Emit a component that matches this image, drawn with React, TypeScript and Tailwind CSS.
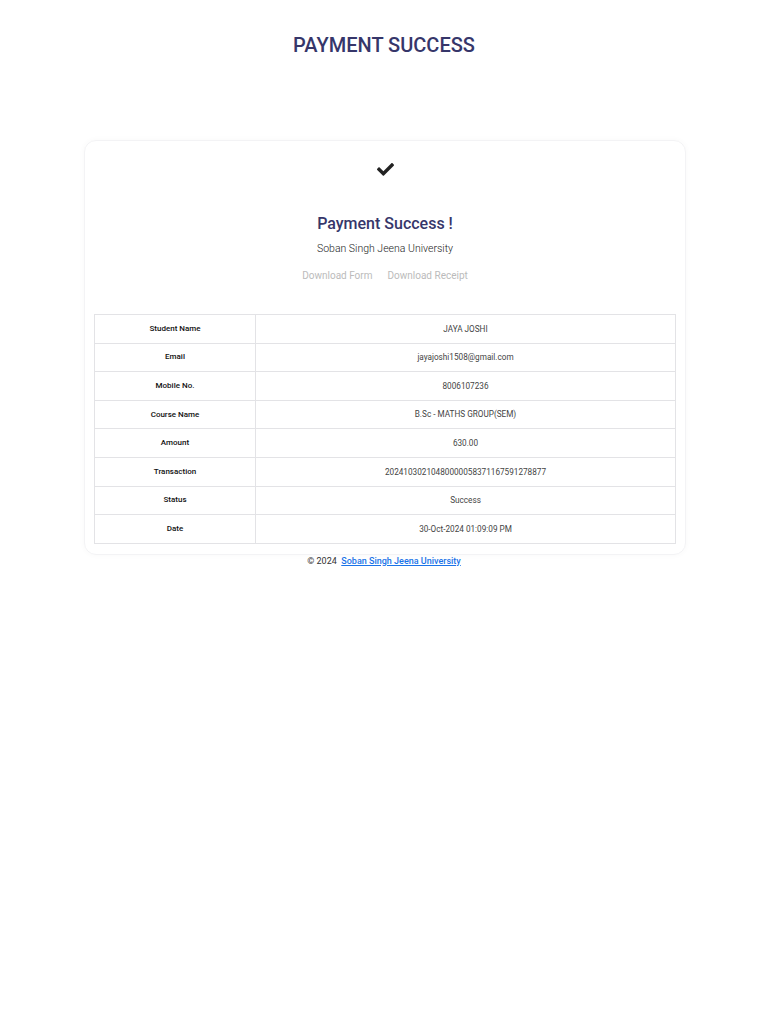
const rows: [string, string][] = [
  ['Student Name', 'JAYA JOSHI'],
  ['Email', 'jayajoshi1508@gmail.com'],
  ['Mobile No.', '8006107236'],
  ['Course Name', 'B.Sc - MATHS GROUP(SEM)'],
  ['Amount', '630.00'],
  ['Transaction', '20241030210480000058371167591278877'],
  ['Status', 'Success'],
  ['Date', '30-Oct-2024 01:09:09 PM'],
];

const CheckIcon = () => (
  <svg width="17" height="14" viewBox="0 0 512 410" fill="#222">
    <path d="M173.9 402.1L7.5 235.7c-10-10-10-26.2 0-36.2l36.2-36.2c10-10 26.2-10 36.2 0L192 275.4 432.1 35.3c10-10 26.2-10 36.2 0l36.2 36.2c10 10 10 26.2 0 36.2L210.1 402.1c-10 10-26.2 10-36.2 0z" />
  </svg>
);

export default function App() {
  return (
    <div className="min-h-screen bg-white pt-[33px] font-['Roboto',sans-serif]">
      <h1 className="text-center text-[20px] font-medium text-[#36366a] leading-[24px]">PAYMENT SUCCESS</h1>

      <div className="mx-auto mt-[83px] w-[602px] translate-x-[1px] rounded-[12px] border border-[#f3f3f5] shadow-[0_0_6px_rgba(0,0,0,0.03)] px-[9px] pt-[20px] pb-[10px]">
        <div className="flex justify-center h-[16px] items-center">
          <CheckIcon />
        </div>
        <h2 className="mt-[37px] text-center text-[16px] font-medium text-[#36366a] leading-[20px]">Payment Success !</h2>
        <p className="mt-[8px] text-center text-[10.5px] font-light text-[#222] leading-[14px]">Soban Singh Jeena University</p>
        <div className="mt-[13px] flex justify-center gap-[15px] text-[10px] text-[#bbb] leading-[14px]">
          <span>Download Form</span>
          <span>Download Receipt</span>
        </div>

        <table className="mt-[31px] w-full border-collapse">
          <tbody>
            {rows.map(([k, v]) => (
              <tr key={k} className="h-[28.6px]">
                <td className="w-[161px] border border-[#e3e3e6] text-center text-[8px] font-medium text-[#111]">{k}</td>
                <td className="border border-[#e3e3e6] text-center text-[8.2px] text-[#444]">{v}</td>
              </tr>
            ))}
          </tbody>
        </table>
      </div>

      <div className="mt-0 text-center text-[9px] text-[#333] leading-[12px]">
        © 2024&nbsp; <a className="font-medium text-[#1a73e8] underline" href="#">Soban Singh Jeena University</a>
      </div>
    </div>
  );
}
